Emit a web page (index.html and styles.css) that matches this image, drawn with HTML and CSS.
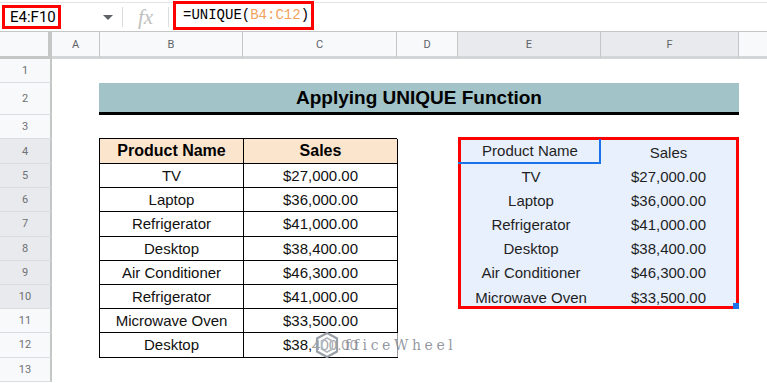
FILE: index.html
```html
<!DOCTYPE html>
<html>
<head>
<meta charset="utf-8">
<link rel="stylesheet" href="styles.css">
</head>
<body>
<div class="fbar">
  <div class="namebox">E4:F10</div>
  <svg class="caret" width="10" height="6" viewBox="0 0 10 6"><path d="M0 0 L10 0 L5 5 Z" fill="#5f6368"/></svg>
  <div class="sep sep1"></div>
  <div class="fx">fx</div>
  <div class="sep"></div>
  <div class="formula">=UNIQUE(<span class="ref">B4:C12</span>)</div>
</div>
<div class="sheet">
  <div class="corner"></div>
  <div class="ch">A</div>
  <div class="ch">B</div>
  <div class="ch">C</div>
  <div class="ch">D</div>
  <div class="ch sel">E</div>
  <div class="ch sel">F</div>
  <div class="ch last"></div>

  <div class="rh r1">1</div>
  <div class="rh r2">2</div>
  <div class="rh r3">3</div>
  <div class="rh sel r4">4</div>
  <div class="rh sel r5">5</div>
  <div class="rh sel r6">6</div>
  <div class="rh sel r7">7</div>
  <div class="rh sel r8">8</div>
  <div class="rh sel r9">9</div>
  <div class="rh sel r10">10</div>
  <div class="rh r11">11</div>
  <div class="rh r12">12</div>
  <div class="rh r13">13</div>

  <div class="title">Applying UNIQUE Function</div>

  <div class="src">
    <div class="c hd">Product Name</div><div class="c hd">Sales</div>
    <div class="c">TV</div><div class="c">$27,000.00</div>
    <div class="c">Laptop</div><div class="c">$36,000.00</div>
    <div class="c">Refrigerator</div><div class="c">$41,000.00</div>
    <div class="c">Desktop</div><div class="c">$38,400.00</div>
    <div class="c">Air Conditioner</div><div class="c">$46,300.00</div>
    <div class="c">Refrigerator</div><div class="c">$41,000.00</div>
    <div class="c">Microwave Oven</div><div class="c">$33,500.00</div>
    <div class="c">Desktop</div><div class="c">$38,400.00</div>
  </div>

  <div class="out">
    <div class="d active">Product Name</div><div class="d">Sales</div>
    <div class="d">TV</div><div class="d">$27,000.00</div>
    <div class="d">Laptop</div><div class="d">$36,000.00</div>
    <div class="d">Refrigerator</div><div class="d">$41,000.00</div>
    <div class="d">Desktop</div><div class="d">$38,400.00</div>
    <div class="d">Air Conditioner</div><div class="d">$46,300.00</div>
    <div class="d">Microwave Oven</div><div class="d">$33,500.00</div>
    <div class="handle"></div>
  </div>

  <div class="watermark">
    <svg width="24" height="28" viewBox="0 0 24 28">
      <path d="M12 2 L22 7.5 L22 20.5 L12 26 L2 20.5 L2 7.5 Z" fill="none" stroke="#9aa0a8" stroke-width="2.2"/>
      <path d="M12 7 L17.5 10 L17.5 18 L12 21 L6.5 18 L6.5 10 Z" fill="none" stroke="#b4b8be" stroke-width="1.6"/>
    </svg>
    <span>fficeWheel</span>
  </div>
</div>
</body>
</html>
```
FILE: styles.css
```css
html, body {
  margin: 0;
  padding: 0;
  background: #fff;
  width: 767px;
  height: 383px;
  overflow: hidden;
}
body {
  font-family: "Liberation Sans", Arial, sans-serif;
  color: #000;
}
.fbar {
  height: 28px;
  margin-top: 2px;
  border-top: 1px solid #e3e3e3;
  display: flex;
  align-items: center;
  position: relative;
}
.namebox {
  box-sizing: border-box;
  margin-left: 2px;
  width: 59px;
  height: 24px;
  border: 3px solid #f00;
  font-family: Roboto, "Liberation Sans", sans-serif;
  font-size: 15px;
  line-height: 18px;
  padding-left: 5px;
  color: #000;
}
.caret {
  margin-left: 42px;
  margin-top: 2px;
}
.sep {
  width: 1px;
  height: 20px;
  background: #dadce0;
}
.sep1 { margin-left: 9px; }
.fx {
  font-family: "Liberation Serif", serif;
  font-style: italic;
  font-size: 21px;
  color: #c0c0c0;
  width: 45px;
  text-align: center;
  line-height: 20px;
}
.formula {
  box-sizing: border-box;
  margin-left: 4px;
  margin-top: -3px;
  height: 29px;
  width: 141px;
  border: 3px solid #f00;
  font-family: "Liberation Mono", monospace;
  font-size: 14px;
  line-height: 22px;
  padding-left: 7px;
  color: #000;
}
.ref { color: #f0a35c; }

.sheet {
  position: relative;
  display: grid;
  grid-template-columns: 52px 48px 143px 154px 61px 143px 138px 1fr;
  grid-template-rows: 28px 24px 32px 24px 25px repeat(9, 24.2px);
}
.corner {
  grid-row: 1;
  grid-column: 1;
  background: #f8f9fa;
  border-top: 1px solid #c4c7c5;
  border-right: 4px solid #c4c7c5;
  border-bottom: 3px solid #c4c7c5;
  box-sizing: border-box;
}
.ch {
  grid-row: 1;
  background: #f8f9fa;
  border-top: 1px solid #c4c7c5;
  border-right: 1px solid #c4c7c5;
  border-bottom: 3px solid #d3d5d7;
  box-sizing: border-box;
  font-family: Roboto, "Liberation Sans", sans-serif;
  font-size: 11px;
  color: #5f6368;
  display: flex;
  align-items: center;
  justify-content: center;
}
.ch.sel { background: #e8eaed; }
.ch.last { border-right: none; }
.rh {
  grid-column: 1;
  background: #f8f9fa;
  border-right: 2px solid #c4c7c5;
  border-bottom: 1px solid #dadce0;
  box-sizing: border-box;
  font-family: Roboto, "Liberation Sans", sans-serif;
  font-size: 11px;
  color: #6e7175;
  display: flex;
  align-items: center;
  justify-content: center;
}
.rh.sel { background: #e8eaed; }
.r1 { grid-row: 2; } .r2 { grid-row: 3; } .r3 { grid-row: 4; }
.r4 { grid-row: 5; } .r5 { grid-row: 6; } .r6 { grid-row: 7; }
.r7 { grid-row: 8; } .r8 { grid-row: 9; } .r9 { grid-row: 10; }
.r10 { grid-row: 11; } .r11 { grid-row: 12; } .r12 { grid-row: 13; }
.r13 { grid-row: 14; }

.title {
  grid-row: 3;
  grid-column: 3 / 8;
  margin-left: -1px;
  background: #a2c4c9;
  border-bottom: 3px solid #000;
  box-sizing: border-box;
  font-weight: bold;
  font-size: 19px;
  display: flex;
  align-items: center;
  justify-content: center;
  padding-top: 1px;
}

.src {
  grid-row: 5 / 14;
  grid-column: 3 / 5;
  margin-left: -1px;
  display: grid;
  grid-template-columns: 144px 154px;
  grid-template-rows: 25px repeat(8, 24.2px);
  border-left: 1px solid #000;
  border-top: 1px solid #000;
  margin-top: -1px;
}
.c {
  border-right: 1px solid #000;
  border-bottom: 1px solid #000;
  display: flex;
  align-items: center;
  justify-content: center;
  font-size: 15px;
  color: #111;
}
.c.hd {
  background: #fce5cd;
  font-weight: bold;
  font-size: 16px;
  color: #000;
}

.out {
  position: relative;
  grid-row: 5 / 12;
  grid-column: 6 / 8;
  margin-top: -2px;
  background: #e8f0fe;
  border: 3px solid #f00;
  box-sizing: border-box;
  display: grid;
  grid-template-columns: 140px 1fr;
  grid-template-rows: 24px repeat(6, 24.2px);
}
.d {
  display: flex;
  align-items: center;
  justify-content: center;
  font-size: 15px;
  color: #1f1f1f;
}
.d.active {
  border-right: 2px solid #1a73e8;
  border-bottom: 2px solid #1a73e8;
  margin-left: -3px;
  margin-top: -1px;
  padding-left: 3px;
}
.handle {
  position: absolute;
  right: -3px;
  bottom: -3px;
  width: 6px;
  height: 6px;
  background: #1a73e8;
}

.watermark {
  position: absolute;
  left: 313px;
  top: 302px;
  height: 24px;
  padding: 0 4px 0 2px;
  display: flex;
  align-items: center;
  gap: 6px;
  background: rgba(255, 255, 255, 0.62);
}
.watermark span {
  font-family: "DejaVu Serif", "Liberation Serif", serif;
  font-size: 14px;
  letter-spacing: 3.6px;
  color: rgba(128, 134, 144, 0.85);
}
```
